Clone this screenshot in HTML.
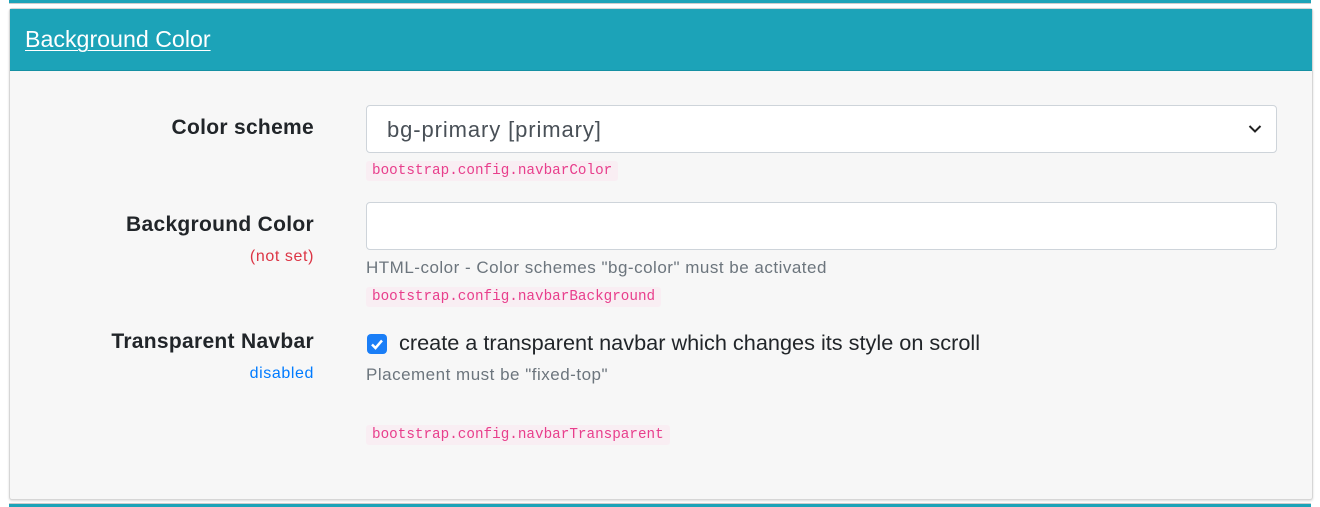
<!DOCTYPE html>
<html><head><meta charset="utf-8"><style>
body{margin:0;width:1320px;height:506px;background:#fff;font-family:"Liberation Sans",sans-serif;position:relative;overflow:hidden}
.a{position:absolute}
.card{left:9px;top:8px;width:1302px;height:490px;border:1px solid #d6d6d6;background:#f7f7f7;border-radius:3px;box-shadow:0 1px 2px rgba(0,0,0,.15)}
.hd{left:10px;top:9px;width:1302px;height:61px;background:#1ca3b8;border-bottom:1px solid #1590a3}
.hd span{position:absolute;left:15px;top:17px;color:#fff;font-size:23.2px;text-decoration:underline;text-underline-offset:3px;text-decoration-thickness:1px}
.lbl{right:1006px;font-weight:bold;font-size:21px;letter-spacing:.3px;color:#212529;text-align:right;white-space:nowrap}
.sub{right:1006px;font-size:16px;letter-spacing:.6px;text-align:right}
.inp{left:366px;width:909px;background:#fff;border:1px solid #ced4da;border-radius:4px}
.code{font-family:"Liberation Mono",monospace;font-size:14.3px;color:#e83e8c;background:#f9eef3;padding:2px 6px;border-radius:3px;left:366px}
.help{left:366px;font-size:17px;letter-spacing:.5px;color:#6c757d;white-space:nowrap}
</style></head><body>
<div class="a" style="left:9px;top:0;width:1302px;height:3px;background:#1ca3b8;border-bottom:1px solid #ccc"></div>
<div class="a card"></div>
<div class="a hd"><span>Background Color</span></div>
<div class="a lbl" style="top:116px">Color scheme</div>
<div class="a inp" style="top:105px;height:46px"><span style="position:absolute;left:20px;top:11px;font-size:22px;letter-spacing:.9px;color:#495057">bg-primary [primary]</span>
<svg style="position:absolute;right:14px;top:18px" width="14" height="10" viewBox="0 0 14 10"><path d="M1.5 2l5.5 5.5L12.5 2" fill="none" stroke="#222" stroke-width="2"/></svg></div>
<div class="a code" style="top:161px">bootstrap.config.navbarColor</div>
<div class="a lbl" style="top:213px">Background Color</div>
<div class="a sub" style="top:248px;color:#dc3545">(not set)</div>
<div class="a inp" style="top:202px;height:46px"></div>
<div class="a help" style="top:258px">HTML-color - Color schemes "bg-color" must be activated</div>
<div class="a code" style="top:287px">bootstrap.config.navbarBackground</div>
<div class="a lbl" style="top:330px">Transparent Navbar</div>
<div class="a sub" style="top:365px;color:#007bff">disabled</div>
<div class="a" style="left:367px;top:334px;width:20px;height:20px;background:#1a7ef7;border-radius:4px"><svg width="20" height="20" viewBox="0 0 20 20"><path d="M5 10.5l3.5 3.5L15 6.5" fill="none" stroke="#fff" stroke-width="2.5"/></svg></div>
<div class="a" style="left:399px;top:330px;font-size:21.7px;color:#212529;white-space:nowrap">create a transparent navbar which changes its style on scroll</div>
<div class="a help" style="top:365px">Placement must be "fixed-top"</div>
<div class="a code" style="top:425px">bootstrap.config.navbarTransparent</div>
<div class="a" style="left:9px;top:503px;width:1302px;height:3px;background:#1ca3b8;border-top:1px solid #ccc"></div>
</body></html>
